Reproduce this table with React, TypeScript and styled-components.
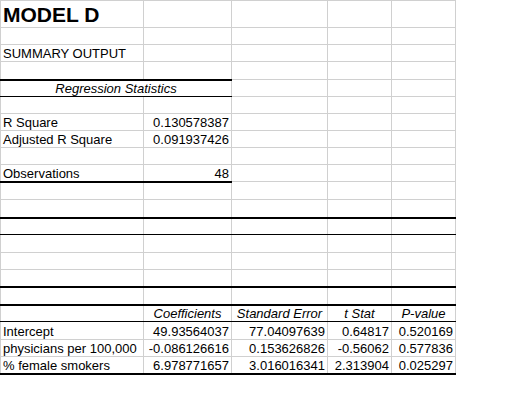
import React from 'react';
import styled, { createGlobalStyle } from 'styled-components';

type Edge = 'thick' | 'thin' | undefined;
type Align = 'left' | 'right' | 'center';

interface CellDef {
  text?: string;
  align?: Align;
  italic?: boolean;
  span?: number;
}

interface RowDef {
  cells: CellDef[];
  edge?: Edge;       // bottom border style
  edgeCols?: number; // how many columns (from the left) get that border
  h?: number;        // row pitch in px
}

const GlobalStyle = createGlobalStyle`
  html, body {
    margin: 0;
    padding: 0;
    background: #ffffff;
  }
`;

const Sheet = styled.table`
  border-collapse: collapse;
  table-layout: fixed;
  width: 456px;
  font-family: 'Liberation Sans', Arial, sans-serif;
  font-size: 13px;
  color: #000;
`;

const Row = styled.tr<{ $h: number }>`
  height: ${p => p.$h}px;
`;

const Cell = styled.td<{ $align: Align; $italic?: boolean; $edge?: Edge }>`
  border: 1px solid #d0d0d0;
  border-bottom: ${p =>
    p.$edge === 'thick' ? '2px solid #000' : p.$edge === 'thin' ? '1px solid #000' : '1px solid #d0d0d0'};
  padding: 0 2px 0 2px;
  vertical-align: bottom;
  line-height: 15px;
  white-space: nowrap;
  overflow: visible;
  text-align: ${p => p.$align};
  font-style: ${p => (p.$italic ? 'italic' : 'normal')};
`;

const Title = styled.span`
  display: block;
  font-size: 21px;
  font-weight: bold;
  line-height: 24px;
`;

const COLS = [143, 88, 96, 64, 64];
const N = COLS.length;

const blank = (): CellDef[] => [];
const header = (t: string): CellDef => ({ text: t, align: 'center', italic: true });
const num = (t: string): CellDef => ({ text: t, align: 'right' });

const ROWS: RowDef[] = [
  { cells: blank(), h: 27 },
  { cells: blank() },
  { cells: [{ text: 'SUMMARY OUTPUT' }] },
  { cells: blank(), edge: 'thick', edgeCols: 2, h: 18 },
  { cells: [{ ...header('Regression Statistics'), span: 2 }], edge: 'thin', edgeCols: 2 },
  { cells: blank() },
  { cells: [{ text: 'R Square' }, num('0.130578387')] },
  { cells: [{ text: 'Adjusted R Square' }, num('0.091937426')] },
  { cells: blank() },
  { cells: [{ text: 'Observations' }, num('48')], edge: 'thick', edgeCols: 2 },
  { cells: blank(), h: 18 },
  { cells: blank(), edge: 'thick', edgeCols: N, h: 18 },
  { cells: blank(), edge: 'thin', edgeCols: N },
  { cells: blank(), h: 18 },
  { cells: blank() },
  { cells: blank(), edge: 'thick', edgeCols: N },
  { cells: blank(), edge: 'thick', edgeCols: N, h: 18 },
  {
    cells: [{}, header('Coefficients'), header('Standard Error'), header('t Stat'), header('P-value')],
    edge: 'thin',
    edgeCols: N,
  },
  { cells: [{ text: 'Intercept' }, num('49.93564037'), num('77.04097639'), num('0.64817'), num('0.520169')], h: 18 },
  {
    cells: [
      { text: 'physicians per 100,000' },
      num('-0.086126616'),
      num('0.153626826'),
      num('-0.56062'),
      num('0.577836'),
    ],
  },
  {
    cells: [{ text: '% female smokers' }, num('6.978771657'), num('3.016016341'), num('2.313904'), num('0.025297')],
    edge: 'thick',
    edgeCols: N,
  },
];

// pads a row out to the full column count, honouring spans
const fillRow = (cells: CellDef[]): CellDef[] => {
  const out: CellDef[] = [...cells];
  let used = out.reduce((n, c) => n + (c.span ?? 1), 0);
  while (used < N) {
    out.push({});
    used += 1;
  }
  return out;
};

export default function App() {
  return (
    <>
      <GlobalStyle />
      <Sheet>
        <colgroup>
          {COLS.map((w, i) => (
            <col key={i} style={{ width: w }} />
          ))}
        </colgroup>
        <tbody>
          {ROWS.map((row, r) => {
            let col = 0;
            return (
              <Row key={r} $h={row.h ?? 17}>
                {fillRow(row.cells).map((c, i) => {
                  const start = col;
                  col += c.span ?? 1;
                  const edge = row.edge && start < (row.edgeCols ?? N) ? row.edge : undefined;
                  return (
                    <Cell key={i} colSpan={c.span} $align={c.align ?? 'left'} $italic={c.italic} $edge={edge}>
                      {r === 0 && i === 0 ? <Title>MODEL D</Title> : c.text}
                    </Cell>
                  );
                })}
              </Row>
            );
          })}
        </tbody>
      </Sheet>
    </>
  );
}
